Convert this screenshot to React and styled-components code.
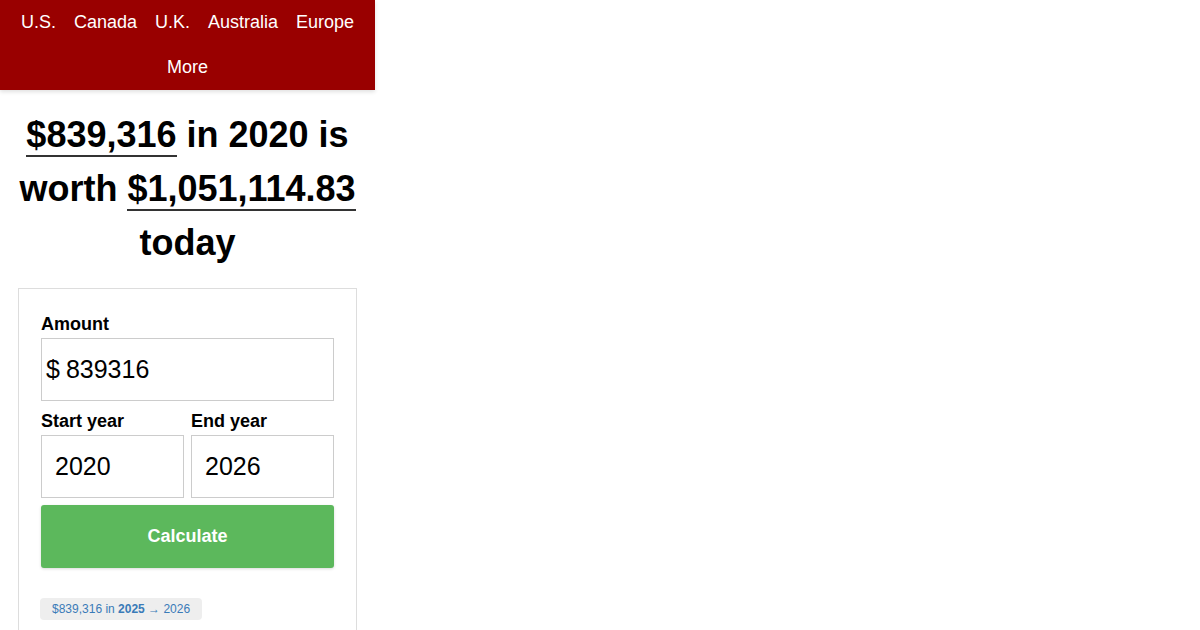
import React from "react";
import styled, { createGlobalStyle } from "styled-components";

const GlobalStyle = createGlobalStyle`
	body {
		margin: 0;
		background: #fff;
		font-family: "Liberation Sans", Arial, sans-serif;
		color: #000;
	}
`;

const Page = styled.div`
	width: 375px;
`;

const Nav = styled.nav`
	background: #990000;
	display: flex;
	flex-wrap: wrap;
	justify-content: center;
	box-shadow: 0 2px 4px rgba(0, 0, 0, 0.12);
`;

const NavLink = styled.a`
	color: #fff;
	font-size: 18px;
	line-height: 45px;
	padding: 0 9px;
	text-decoration: none;
`;

const Main = styled.main`
	padding: 18px 18px 0;
`;

const Headline = styled.h1`
	margin: 0;
	font-size: 36px;
	line-height: 54px;
	font-weight: bold;
	text-align: center;
`;

const Figure = styled.span`
	border-bottom: 2px solid #333;
`;

const Card = styled.form`
	margin-top: 18px;
	border: 1px solid #ddd;
	padding: 21px 22px 40px;
`;

const Label = styled.label`
	display: block;
	font-size: 18px;
	font-weight: bold;
	line-height: 28px;
`;

const Field = styled.div`
	display: flex;
	align-items: center;
	height: 63px;
	box-sizing: border-box;
	border: 1px solid #ccc;
	font-size: 25px;
	background: #fff;
`;

const Prefix = styled.span`
	padding-left: 4px;
`;

const Input = styled.input`
	border: 0;
	outline: none;
	background: transparent;
	font: inherit;
	color: #000;
	width: 100%;
	min-width: 0;
	padding: 0 0 0 ${(p) => p.$pad}px;
`;

const Row = styled.div`
	display: grid;
	grid-template-columns: 1fr 1fr;
	column-gap: 7px;
	margin-top: 6px;
`;

const Button = styled.button`
	display: block;
	width: 100%;
	height: 63px;
	margin-top: 7px;
	border: 0;
	border-radius: 3px;
	background: #5cb85c;
	color: #fff;
	font-family: inherit;
	font-size: 18px;
	font-weight: bold;
	box-shadow: 0 1px 3px rgba(0, 0, 0, 0.15);
`;

const Chip = styled.a`
	display: inline-block;
	margin: 30px 0 0 -1px;
	padding: 0 12px;
	line-height: 22px;
	border-radius: 4px;
	background: #eee;
	color: #3a7bb8;
	font-size: 12px;
	text-decoration: none;
`;

export default function App() {
	return (
		<Page>
			<GlobalStyle />
			<Nav>
				{["U.S.", "Canada", "U.K.", "Australia", "Europe", "More"].map((n) => (
					<NavLink key={n} href="#">
						{n}
					</NavLink>
				))}
			</Nav>
			<Main>
				<Headline>
					<Figure>$839,316</Figure> in 2020 is worth <Figure>$1,051,114.83</Figure> today
				</Headline>
				<Card onSubmit={(e) => e.preventDefault()}>
					<Label>Amount</Label>
					<Field>
						<Prefix>$</Prefix>
						<Input $pad={6} defaultValue="839316" />
					</Field>
					<Row>
						<div>
							<Label>Start year</Label>
							<Field>
								<Input $pad={13} defaultValue="2020" />
							</Field>
						</div>
						<div>
							<Label>End year</Label>
							<Field>
								<Input $pad={13} defaultValue="2026" />
							</Field>
						</div>
					</Row>
					<Button type="submit">Calculate</Button>
					<Chip href="#">
						$839,316 in <b>2025</b> → 2026
					</Chip>
				</Card>
			</Main>
		</Page>
	);
}
